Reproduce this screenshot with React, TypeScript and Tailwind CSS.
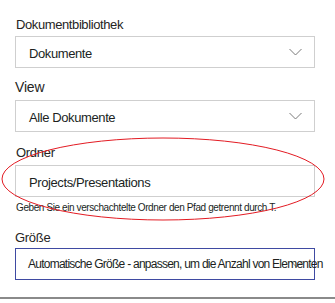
import React from "react";

const Chevron = () => (
  <svg width="13" height="8" viewBox="0 0 13 8" className="shrink-0">
    <path d="M0.5 1 L6.5 7 L12.5 1" fill="none" stroke="#7a7a7a" strokeWidth="1" />
  </svg>
);

const Dropdown = ({ value }: { value: string }) => (
  <div className="relative h-8 w-[300px] border border-[#cfcfcf] bg-white">
    <div className="pl-[13px] pt-[7px] text-[13px] tracking-[-0.4px] leading-5 text-[#201f1e] whitespace-nowrap">
      {value}
    </div>
    <div className="absolute right-[12px] top-[11px]">
      <Chevron />
    </div>
  </div>
);

const App = () => {
  return (
    <div
      className="relative w-[335px] h-[303px] bg-white overflow-hidden"
      style={{ fontFamily: '"Segoe UI", "Liberation Sans", Arial, sans-serif' }}
    >
      <div className="flex flex-col px-[15px]">
        {/* Dokumentbibliothek */}
        <div className="mt-[15px] pl-[1px] text-[13px] tracking-[-0.4px] leading-5 text-[#252423]">
          Dokumentbibliothek
        </div>
        <div className="mt-[1px]">
          <Dropdown value="Dokumente" />
        </div>

        {/* View */}
        <div className="mt-[9px] text-[14px] tracking-[-0.2px] leading-5 text-[#252423]">
          View
        </div>
        <div className="mt-[3px]">
          <Dropdown value="Alle Dokumente" />
        </div>

        {/* Ordner */}
        <div className="mt-[11px] pl-[1px] text-[13px] tracking-[-0.3px] leading-5 text-[#252423]">
          Ordner
        </div>
        <div className="mt-[2px] h-8 w-[300px] border border-[#cfcfcf] bg-white">
          <div className="pl-[13px] pt-[7px] text-[13px] tracking-[-0.4px] leading-5 text-[#201f1e]">
            Projects/Presentations
          </div>
        </div>
        <div className="mt-[3px] pl-[1px] text-[10px] tracking-[-0.4px] leading-4 text-[#201f1e] whitespace-nowrap">
          Geben Sie ein verschachtelte Ordner den Pfad getrennt durch T.
        </div>

        {/* Größe */}
        <div className="mt-[12px] text-[13px] tracking-[-0.3px] leading-5 text-[#252423]">
          Größe
        </div>
        <div className="relative h-8 w-[300px] border border-[#3f4aa2] bg-white">
          <div className="absolute right-[11px] top-[11px]">
            <Chevron />
          </div>
          <div className="relative pl-[12px] pt-[5px] text-[12px] tracking-[-0.75px] leading-5 text-[#201f1e] whitespace-nowrap">
            Automatische Größe - anpassen, um die Anzahl von Elementen
          </div>
        </div>
      </div>

      <div className="absolute left-0 right-0 top-[297px] h-[2px] bg-[#8a8a8a]" />

      {/* red annotation ellipse */}
      <svg
        className="absolute left-0 top-0 pointer-events-none"
        width="335"
        height="303"
      >
        <ellipse
          cx="163"
          cy="179"
          rx="161"
          ry="41"
          fill="none"
          stroke="#e31b23"
          strokeWidth="1"
        />
      </svg>
    </div>
  );
};

export default App;
